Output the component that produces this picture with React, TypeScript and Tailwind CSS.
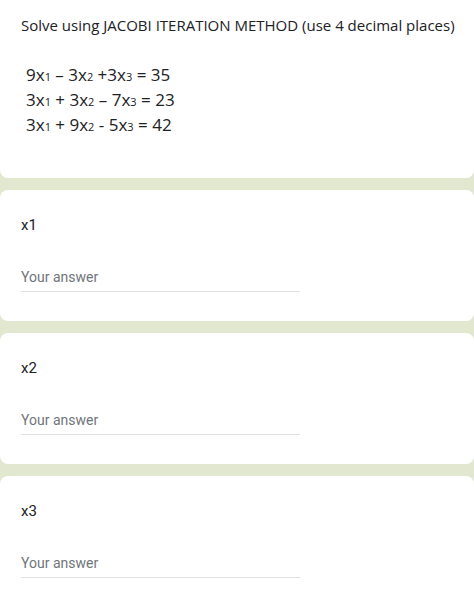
import React from "react";

const Eq = ({ parts }: { parts: (string | [string])[] }) => (
  <div className="h-[25px] leading-[25px] whitespace-pre">
    {parts.map((p, i) =>
      typeof p === "string" ? (
        <span key={i}>{p}</span>
      ) : (
        <span key={i} className="text-[11px]">{p[0]}</span>
      )
    )}
  </div>
);

const Question = ({ label }: { label: string }) => (
  <div className="h-[131px] bg-white rounded-[8px] px-[21px] pt-[26px]">
    <div className="text-[15px] leading-[18px] text-[#202124]">{label}</div>
    <div className="mt-[34px] w-[279px]">
      <div className="text-[14px] leading-[18px] text-[#70757a]">Your answer</div>
      <div className="mt-[5px] h-px bg-[#e0e0e0]" />
    </div>
  </div>
);

export default function App() {
  return (
    <div
      className="w-[474px] h-[594px] overflow-hidden bg-[#e2e8cf]"
      style={{ fontFamily: "Roboto, 'Liberation Sans', sans-serif" }}
    >
      <div className="h-[178px] bg-white rounded-b-[8px] px-[21px] pt-[16px]">
        <div
          className="text-[15px] leading-[18px] text-[#202124] whitespace-nowrap"
          style={{ fontFamily: "'Open Sans', sans-serif" }}
        >
          Solve using JACOBI ITERATION METHOD (use 4 decimal places)
        </div>
        <div
          className="mt-[28px] pl-[5px] text-[17px] text-[#202124]"
          style={{ fontFamily: "'Open Sans', 'Noto Sans', sans-serif" }}
        >
          <Eq parts={["9x", ["1"], " – 3x", ["2"], " +3x", ["3"], " = 35"]} />
          <Eq parts={["3x", ["1"], " + 3x", ["2"], " – 7x", ["3"], " = 23"]} />
          <Eq parts={["3x", ["1"], " + 9x", ["2"], " - 5x", ["3"], " = 42"]} />
        </div>
      </div>
      <div className="flex flex-col gap-[12px] mt-[12px]">
        <Question label="x1" />
        <Question label="x2" />
        <Question label="x3" />
      </div>
    </div>
  );
}
